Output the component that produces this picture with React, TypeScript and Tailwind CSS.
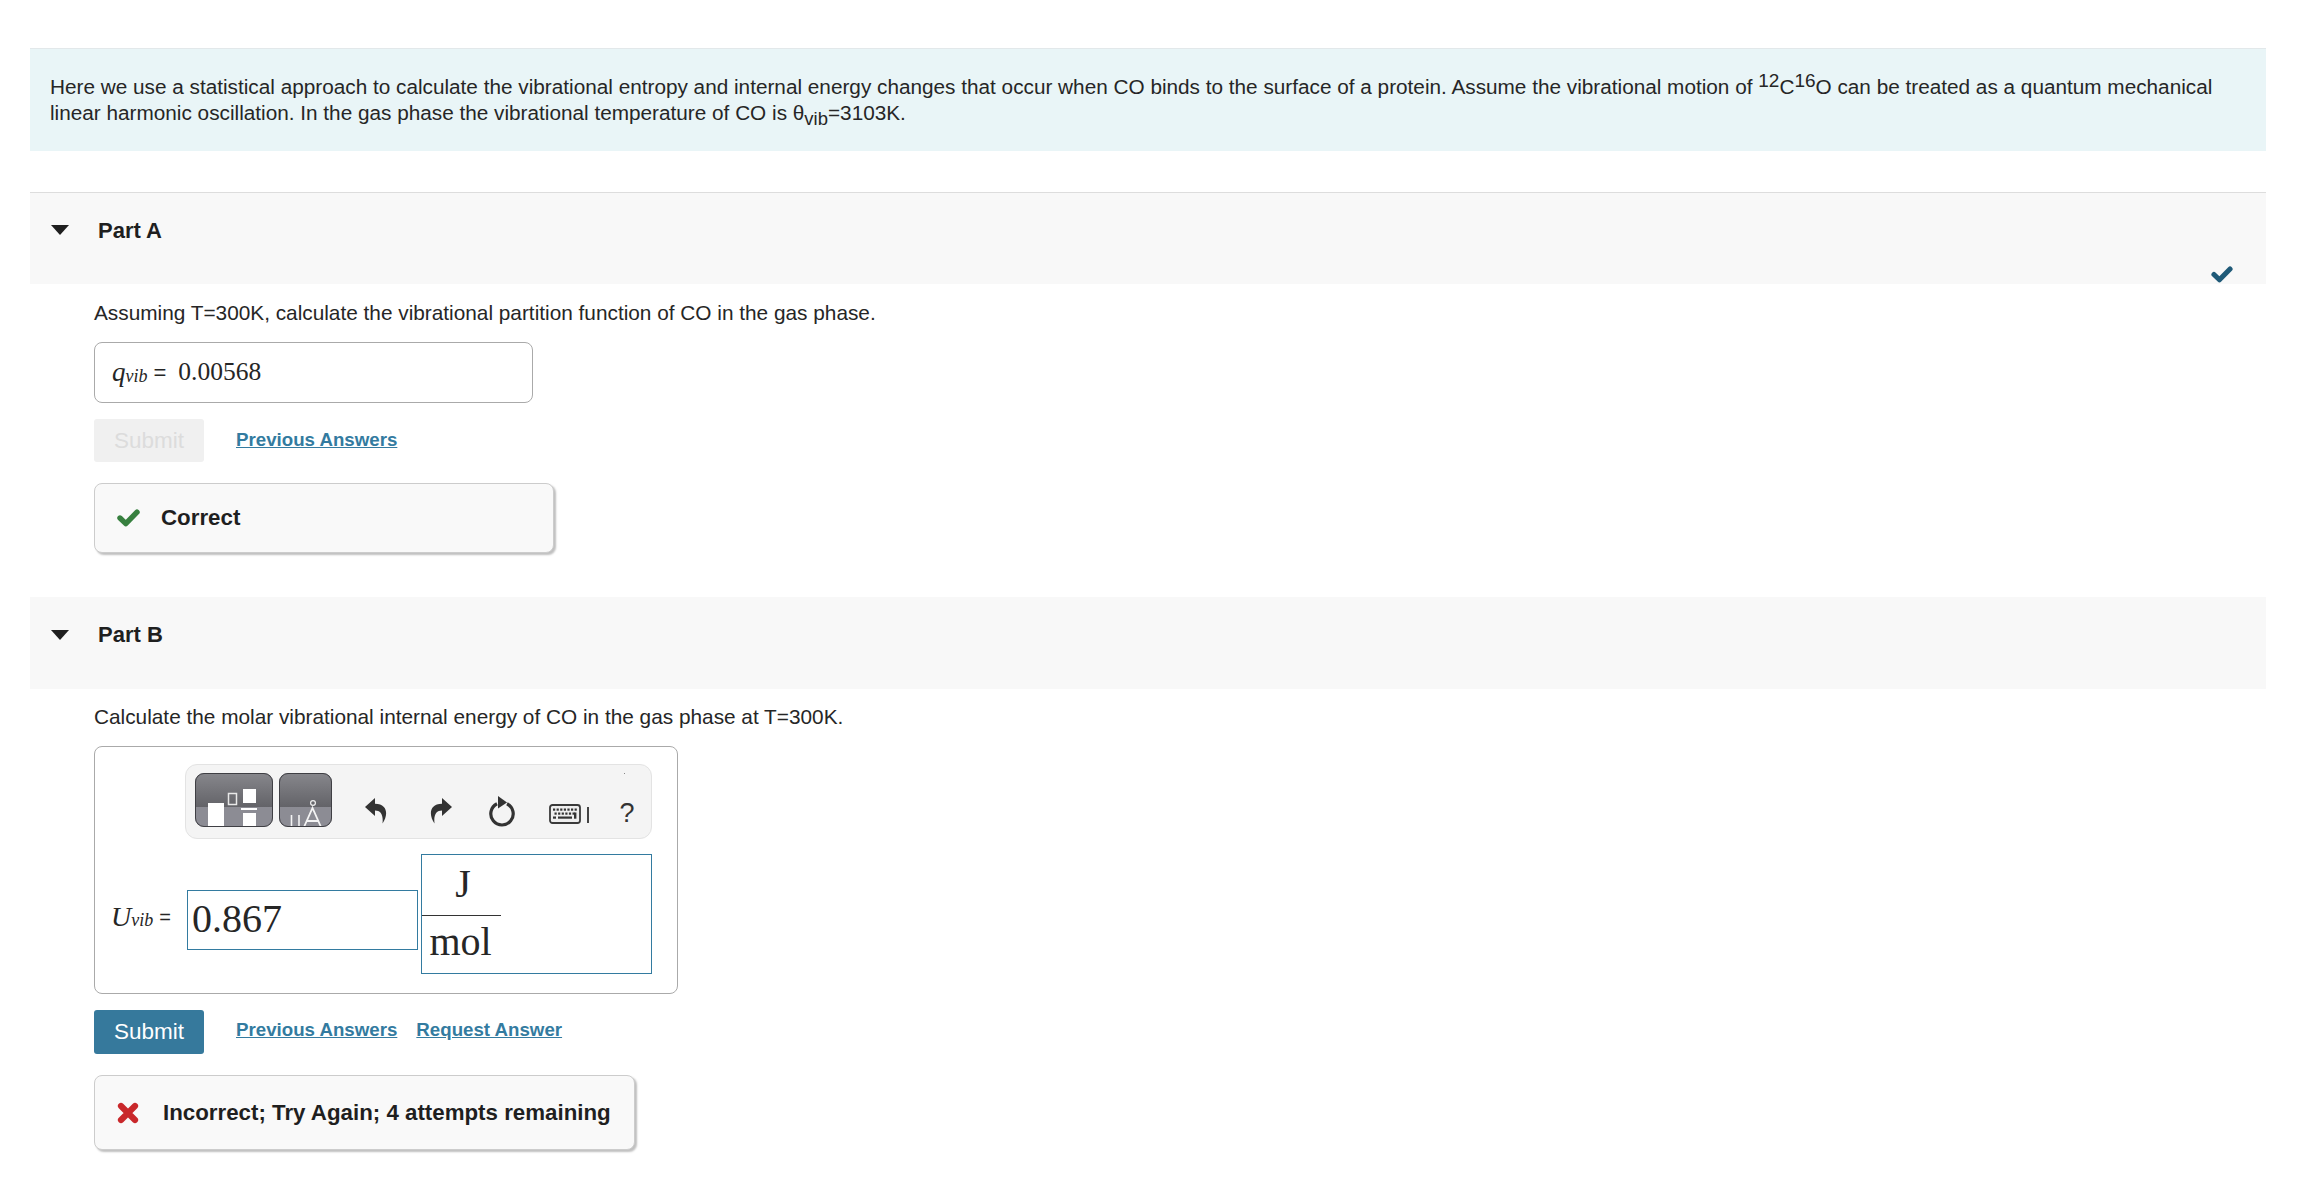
const sans = "font-['Liberation_Sans',Arial,sans-serif]"
const serif = "font-['Liberation_Serif','Times_New_Roman',serif]"

function CheckMark({ className }: { className: string }) {
  return (
    <svg viewBox="0 0 23 18" className={className}>
      <path d="M3 9 L8.8 14.6 L20 3.2" fill="none" stroke="currentColor" strokeWidth="5.4" strokeLinejoin="round" strokeLinecap="round" />
    </svg>
  )
}

function CrossMark({ className }: { className: string }) {
  return (
    <svg viewBox="0 0 22 22" className={className}>
      <path d="M4 4 L18 18 M18 4 L4 18" fill="none" stroke="currentColor" strokeWidth="6.2" strokeLinecap="round" />
    </svg>
  )
}

function PaletteTemplates() {
  return (
    <svg width="78" height="54" viewBox="0 0 78 54" className="block">
      <defs>
        <linearGradient id="palA" x1="0" y1="0" x2="0" y2="1">
          <stop offset="0" stopColor="#87878c" />
          <stop offset="1" stopColor="#636368" />
        </linearGradient>
        <clipPath id="clipA">
          <rect width="78" height="54" rx="9" />
        </clipPath>
      </defs>
      <g clipPath="url(#clipA)">
        <rect width="78" height="34" fill="url(#palA)" />
        <rect y="34" width="78" height="20" fill="#8c8c94" />
        <rect x="13" y="30" width="16" height="24" fill="#fff" />
        <rect x="33.5" y="20.5" width="8" height="11" fill="none" stroke="#e8e8e8" strokeWidth="1.5" />
        <rect x="48" y="16" width="13" height="14" fill="#fff" />
        <rect x="46" y="35" width="16" height="2" fill="#fff" />
        <rect x="48" y="40" width="13" height="14" fill="#fff" />
      </g>
      <rect x="0.5" y="0.5" width="77" height="53" rx="8.5" fill="none" stroke="#3f3f44" />
    </svg>
  )
}

function PaletteUnits() {
  return (
    <svg width="53" height="54" viewBox="0 0 53 54" className="block">
      <defs>
        <linearGradient id="palB" x1="0" y1="0" x2="0" y2="1">
          <stop offset="0" stopColor="#87878c" />
          <stop offset="1" stopColor="#636368" />
        </linearGradient>
        <clipPath id="clipB">
          <rect width="53" height="54" rx="9" />
        </clipPath>
      </defs>
      <g clipPath="url(#clipB)">
        <rect width="53" height="34" fill="url(#palB)" />
        <rect y="34" width="53" height="20" fill="#8c8c94" />
        <path d="M12.5 42 V54 M20 42 V54" stroke="#f4f4f4" strokeWidth="1.6" />
        <path d="M25 54 L33.5 35 L42 54 M28 48 H39" fill="none" stroke="#f4f4f4" strokeWidth="1.8" />
        <circle cx="34" cy="30" r="2.4" fill="none" stroke="#f0f0f0" strokeWidth="1.2" />
      </g>
      <rect x="0.5" y="0.5" width="52" height="53" rx="8.5" fill="none" stroke="#3f3f44" />
    </svg>
  )
}

function UndoIcon({ flip }: { flip?: boolean }) {
  return (
    <svg width="23" height="26" viewBox="0 0 23 26" className={flip ? '-scale-x-100' : ''}>
      <path d="M10 0 L0 9 L10 18 V12.5 C15.5 12.5 18.5 16.5 17.5 25.5 C23 18 23.5 6 10 5.8 Z" fill="#333" />
    </svg>
  )
}

function ResetIcon() {
  return (
    <svg width="28" height="31" viewBox="0 0 28 31">
      <path d="M9 7.8 A11.2 11.2 0 1 0 19 7.8" fill="none" stroke="#333" strokeWidth="3.2" />
      <path d="M10 0 L19 6.5 L10 12.5 Z" fill="#333" />
    </svg>
  )
}

function KeyboardIcon() {
  const keys = [0, 1, 2, 3, 4, 5, 6]
  return (
    <svg width="32" height="20" viewBox="0 0 32 20">
      <rect x="1" y="1" width="30" height="18" rx="2.5" fill="#eee" stroke="#3a3a3a" strokeWidth="1.8" />
      {keys.map(k => (
        <rect key={`a${k}`} x={4 + k * 3.6} y="4.5" width="2.2" height="2.2" fill="#333" />
      ))}
      {keys.slice(0, 6).map(k => (
        <rect key={`b${k}`} x={5.5 + k * 3.6} y="8.5" width="2.2" height="2.2" fill="#333" />
      ))}
      <rect x="4" y="12.5" width="3" height="2.2" fill="#333" />
      <rect x="9" y="12.5" width="14" height="2.2" fill="#333" />
      <rect x="25" y="8.5" width="2.4" height="6.2" fill="#333" />
    </svg>
  )
}

function Toolbar() {
  return (
    <div className="relative ml-[90px] flex h-[75px] w-[467px] items-start rounded-[12px] border border-[#e3e3e3] bg-[#f4f4f4] pl-[9px] pt-2">
      <PaletteTemplates />
      <div className="ml-[6px]">
        <PaletteUnits />
      </div>
      <div className="ml-[33px] mt-[25px]">
        <UndoIcon />
      </div>
      <div className="ml-[41px] mt-[25px]">
        <UndoIcon flip />
      </div>
      <div className="ml-[36px] mt-[23px]">
        <ResetIcon />
      </div>
      <div className="ml-[33px] mt-[31px]">
        <KeyboardIcon />
      </div>
      <div className="ml-[6px] mt-[34px] h-[16px] w-[1.5px] bg-[#444]" />
      <div className={`ml-[31px] mt-[22px] text-[27px] leading-[36px] text-[#333] ${sans}`}>?</div>
      <div className="absolute right-[26px] top-[8px] h-px w-px bg-[#888]" />
    </div>
  )
}

function PartHeader({ label, check }: { label: string; check?: boolean }) {
  return (
    <div className={`relative flex h-[92px] items-center border-[#dddddd] bg-[#f8f8f8] pb-[17px] pl-[21px] ${check ? 'border-t' : ''}`}>
      <svg width="18" height="10" viewBox="0 0 18 10" className="shrink-0">
        <path d="M0 0 H18 L9 10 Z" fill="#1f1f1f" />
      </svg>
      <span className="ml-[29px] text-[22px] font-bold text-[#1f1f1f]">{label}</span>
      {check && <CheckMark className="absolute bottom-[1px] right-[33px] h-[17px] w-[22px] text-[#1f5a78]" />}
    </div>
  )
}

function LinkText({ children }: { children: string }) {
  return <a className="text-[18.7px] font-bold leading-[22px] text-[#337ba0] underline">{children}</a>
}

function Feedback({ ok, text, width, height }: { ok: boolean; text: string; width: string; height: string }) {
  return (
    <div className={`flex items-center rounded-[8px] border border-[#cccccc] bg-[#f9f9f9] pl-[22px] shadow-[2px_2px_2px_rgba(0,0,0,0.25)] ${width} ${height}`}>
      {ok ? (
        <CheckMark className="h-[18px] w-[23px] text-[#37803f]" />
      ) : (
        <CrossMark className="h-[22px] w-[22px] text-[#c9282b]" />
      )}
      <span className={`text-[22.3px] font-bold text-[#1f1f1f] ${ok ? 'ml-[21px]' : 'ml-[24px]'}`}>{text}</span>
    </div>
  )
}

export default function App() {
  return (
    <div className={`min-h-[1180px] bg-white pb-[31px] pl-[30px] pr-[42px] pt-[48px] text-[#262626] ${sans}`}>
      {/* Intro */}
      <div className="h-[103px] border-t border-[#e2e8ea] bg-[#e9f5f7] px-[20px] pt-[25px] text-[20.75px] leading-[26px]">
        Here we use a statistical approach to calculate the vibrational entropy and internal energy changes that occur when CO binds to the surface of a protein. Assume the vibrational motion of{' '}
        <sup className="top-[-7px] text-[19px] leading-none">12</sup>C<sup className="top-[-7px] text-[19px] leading-none">16</sup>O can be treated as a quantum mechanical linear harmonic oscillation. In the gas phase the vibrational temperature of CO is θ
        <sub className="top-[5px] text-[18.5px] leading-none">vib</sub>=3103K.
      </div>

      <div className="mt-[41px]">
        <PartHeader label="Part A" check />
      </div>
      <div className="pl-[64px]">
        <p className="mt-[16px] text-[20.8px] leading-[26px]">Assuming T=300K, calculate the vibrational partition function of CO in the gas phase.</p>
        <div className="mt-[16px] flex h-[61px] w-[439px] items-center rounded-[8px] border border-[#aaaaaa] pl-[17px]">
          <span className={`text-[27px] italic leading-none ${serif}`}>q</span>
          <span className={`mt-[6px] text-[18px] italic leading-none ${serif}`}>vib</span>
          <span className="ml-[6px] text-[22px] leading-none">=</span>
          <span className={`ml-[12px] -translate-y-px text-[25.5px] leading-none ${serif}`}>0.00568</span>
        </div>
        <div className="mt-[16px] flex h-[43px] items-center">
          <button className="h-[43px] w-[110px] rounded-[3px] bg-[#f0f0f0] text-[22.5px] text-[#dcdcdc]">Submit</button>
          <div className="ml-[32px]">
            <LinkText>Previous Answers</LinkText>
          </div>
        </div>
        <div className="mt-[21px]">
          <Feedback ok text="Correct" width="w-[460px]" height="h-[70px]" />
        </div>
      </div>

      <div className="mt-[44px]">
        <PartHeader label="Part B" />
      </div>
      <div className="pl-[64px]">
        <p className="mt-[15px] text-[20.8px] leading-[26px]">Calculate the molar vibrational internal energy of CO in the gas phase at T=300K.</p>
        <div className="mt-[16px] h-[248px] w-[584px] rounded-[8px] border border-[#aaaaaa] pt-[17px]">
          <Toolbar />
          <div className="mt-[15px] flex items-center pl-[16px]">
            <div className="mt-[6px] flex w-[76px] items-center">
              <span className={`text-[28px] italic leading-none ${serif}`}>U</span>
              <span className={`mt-[6px] text-[18px] italic leading-none ${serif}`}>vib</span>
              <span className="ml-[6px] text-[20px] leading-none">=</span>
            </div>
            <div className={`mt-[12px] flex h-[60px] w-[231px] items-center border border-[#337ba0] pb-[2px] pl-[4px] text-[40px] leading-none ${serif}`}>0.867</div>
            <div className={`ml-[3px] h-[120px] w-[231px] border border-[#337ba0] text-[#262626] ${serif}`}>
              <div className="h-[61px] w-[79px] border-b border-[#333] pl-[3px] pt-[6px] text-center text-[40px] leading-[46px]">J</div>
              <div className="w-[79px] pr-[2px] pt-[3px] text-center text-[40px] leading-[46px]">mol</div>
            </div>
          </div>
        </div>
        <div className="mt-[16px] flex h-[44px] items-center">
          <button className="h-[44px] w-[110px] rounded-[3px] bg-[#36799c] text-[22.5px] text-white">Submit</button>
          <div className="ml-[32px] flex gap-[19px] pb-[4px]">
            <LinkText>Previous Answers</LinkText>
            <LinkText>Request Answer</LinkText>
          </div>
        </div>
        <div className="mt-[21px]">
          <Feedback ok={false} text="Incorrect; Try Again; 4 attempts remaining" width="w-[541px]" height="h-[75px]" />
        </div>
      </div>
    </div>
  )
}
